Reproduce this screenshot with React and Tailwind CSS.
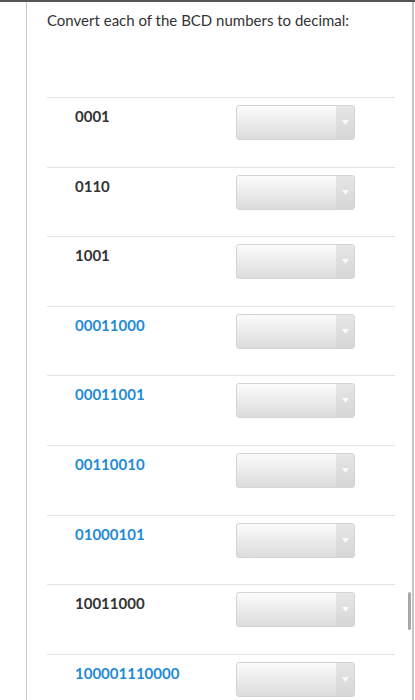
const ROWS = [
  { bcd: '0001', link: false },
  { bcd: '0110', link: false },
  { bcd: '1001', link: false },
  { bcd: '00011000', link: true },
  { bcd: '00011001', link: true },
  { bcd: '00110010', link: true },
  { bcd: '01000101', link: true },
  { bcd: '10011000', link: false },
  { bcd: '100001110000', link: true },
];

function Dropdown() {
  return (
    <div className="flex h-[35px] w-[119px] overflow-hidden rounded-[3px] border border-[#d4d4d4] bg-gradient-to-b from-[#fbfbfb] to-[#dcdcdc]">
      <div className="flex-1" />
      <div className="flex w-[18px] items-center justify-center bg-[#d9d9d9] bg-gradient-to-b from-[#e6e6e6] to-[#d6d6d6]">
        <svg width="7" height="5" viewBox="0 0 7 5">
          <path d="M0 0h7L3.5 5z" fill="#fafafa" />
        </svg>
      </div>
    </div>
  );
}

export default function App() {
  return (
    <div
      className="relative h-[700px] w-[415px] overflow-hidden border-t-2 border-[#555] bg-white"
      style={{ fontFamily: 'Lato, "Open Sans", sans-serif' }}
    >
      <div className="ml-[26px] mr-[1px] h-full border-l border-r-2 border-[#c8c8c8] border-r-[#c4c4c4]">
        <div className="pl-[20px] pr-[17px]">
          <h1 className="pt-[8px] text-[15px] leading-[20px] text-[#333]">
            Convert each of the BCD numbers to decimal:
          </h1>

          <div className="mt-[67px]">
            {ROWS.map((r) => (
              <div
                key={r.bcd}
                className="box-border flex h-[69.6px] items-start border-t border-[#e4e4e4]"
              >
                <div
                  className={
                    'w-[189px] pl-[28px] pt-[9px] text-[15px] leading-[18px] font-bold ' +
                    (r.link ? 'text-[#1f8bd6]' : 'text-[#333]')
                  }
                >
                  {r.bcd}
                </div>
                <div className="pt-[7px]">
                  <Dropdown />
                </div>
              </div>
            ))}
          </div>
        </div>
      </div>

      {/* scrollbar thumb */}
      <div className="absolute left-[408px] top-[590px] h-[38px] w-[3px] rounded-full bg-[#a8a8a8]" />
    </div>
  );
}
